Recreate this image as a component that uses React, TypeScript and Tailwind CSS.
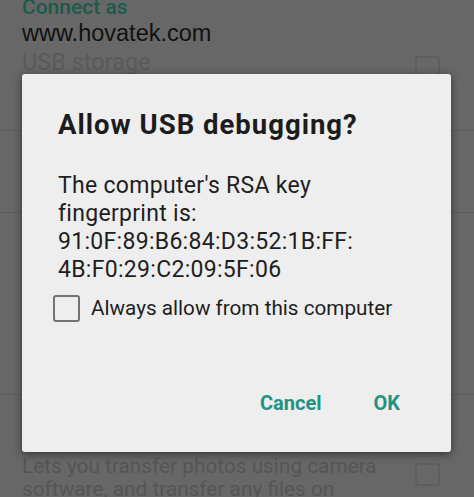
import React from "react";

const roboto = { fontFamily: "Roboto, 'Noto Sans', sans-serif" };

function BgCheckbox() {
  return <div className="w-[25px] h-[23px] border-2 border-[#5e5e5e] rounded-[2px]" />;
}

export default function App() {
  return (
    <div
      className="relative w-[474px] h-[497px] overflow-hidden bg-[#676767]"
      style={roboto}
    >
      {/* background settings screen */}
      <div className="flex flex-col">
        <div className="h-[131px] pl-[22px] pr-[34px] border-b border-[#5d5d5d]">
          <div className="mt-[-6px] text-[21px] leading-[26px] font-medium text-[#1d5a4d]">
            Connect as
          </div>
          <div
            className="text-[23.5px] leading-[26px] text-[#111111]"
            style={{ fontFamily: "'Liberation Sans', Arial, sans-serif" }}
          >
            www.hovatek.com
          </div>
          <div className="flex items-start justify-between">
            <div className="mt-[2px] text-[23.5px] leading-[28px] text-[#5a5a5a]">USB storage</div>
            <div className="mt-[10px]">
              <BgCheckbox />
            </div>
          </div>
        </div>
        <div className="h-[82px] border-b border-[#5d5d5d]" />
        <div className="h-[182px] border-b border-[#5d5d5d]" />
        <div className="pl-[22px] pr-[34px] pt-[60px] flex items-start justify-between">
          <div className="text-[20.8px] leading-[23px] text-[#555555]">
            Lets you transfer photos using camera
            <br />
            software, and transfer any files on
          </div>
          <div className="mt-[8px]">
            <BgCheckbox />
          </div>
        </div>
      </div>

      {/* dialog overlay */}
      <div className="absolute left-[22px] top-[74px] w-[429px] h-[378px] bg-[#eeeeee] rounded-[3px] shadow-[0_2px_8px_rgba(0,0,0,0.5)] flex flex-col">
        <div className="pl-[36px] pr-[20px] pt-[36px]">
          <div className="text-[27.5px] leading-[30px] font-bold tracking-[1px] text-[#1c1c1c]">
            Allow USB debugging?
          </div>
          <div className="mt-[32px] text-[23px] leading-[28px] tracking-[0.3px] text-[#1e1e1e]">
            The computer's RSA key
            <br />
            fingerprint is:
            <br />
            91:0F:89:B6:84:D3:52:1B:FF:
            <br />
            4B:F0:29:C2:09:5F:06
          </div>
        </div>
        <div className="mt-[10px] pl-[31px] flex items-center gap-[11px]">
          <div className="w-[27px] h-[27px] border-2 border-[#737373] rounded-[3px]" />
          <div className="text-[20.7px] leading-[28px] text-[#1e1e1e]">
            Always allow from this computer
          </div>
        </div>
        <div className="mt-auto mb-[35px] pr-[51px] flex justify-end items-center gap-[52px]">
          <div className="text-[20px] leading-[28px] font-bold text-[#1f9482]">Cancel</div>
          <div className="text-[20px] leading-[28px] font-bold text-[#1f9482]">OK</div>
        </div>
      </div>
    </div>
  );
}
